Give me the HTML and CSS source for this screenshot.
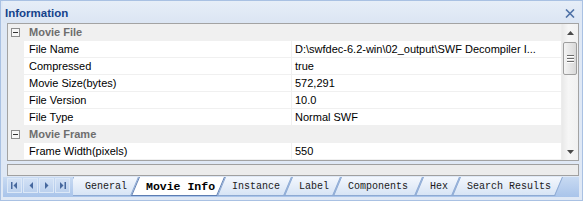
FILE: index.html
```html
<!DOCTYPE html>
<html>
<head>
<meta charset="utf-8">
<link rel="stylesheet" href="styles.css">
</head>
<body>
<div class="window">
  <div class="titlebar">
    <span class="title">Information</span>
    <svg class="close" width="10" height="9" viewBox="0 0 10 9"><path d="M1 0.5 L9 8.5 M9 0.5 L1 8.5" stroke="#4f71a6" stroke-width="1.6" fill="none"/></svg>
  </div>
  <div class="grid">
    <div class="rows">
      <div class="row cat"><span class="margin"><i class="toggle"></i></span><span class="cat-label">Movie File</span></div>
      <div class="row prop"><span class="margin"></span><span class="name">File Name</span><span class="value">D:\swfdec-6.2-win\02_output\SWF Decompiler I...</span></div>
      <div class="row prop"><span class="margin"></span><span class="name">Compressed</span><span class="value">true</span></div>
      <div class="row prop"><span class="margin"></span><span class="name">Movie Size(bytes)</span><span class="value">572,291</span></div>
      <div class="row prop"><span class="margin"></span><span class="name">File Version</span><span class="value">10.0</span></div>
      <div class="row prop"><span class="margin"></span><span class="name">File Type</span><span class="value">Normal SWF</span></div>
      <div class="row cat"><span class="margin"><i class="toggle"></i></span><span class="cat-label">Movie Frame</span></div>
      <div class="row prop"><span class="margin"></span><span class="name">Frame Width(pixels)</span><span class="value">550</span></div>
    </div>
    <div class="vscroll">
      <div class="sbtn"><svg width="7" height="4" viewBox="0 0 7 4"><path d="M3.5 0 L7 4 L0 4 Z" fill="#4a4a4a"/></svg></div>
      <div class="track"><div class="thumb"><i></i><i></i><i></i></div></div>
      <div class="sbtn"><svg width="7" height="4" viewBox="0 0 7 4"><path d="M0 0 L7 0 L3.5 4 Z" fill="#4a4a4a"/></svg></div>
    </div>
  </div>
  <div class="desc"></div>
  <div class="tabstrip">
    <div class="nav">
      <span class="navbtn"><svg width="7" height="7" viewBox="0 0 7 7"><rect x="0" y="0" width="1.5" height="7" fill="#46689e"/><path d="M6 0 L6 7 L2.5 3.5 Z" fill="#46689e"/></svg></span>
      <span class="navbtn"><svg width="4" height="7" viewBox="0 0 4 7"><path d="M4 0 L4 7 L0.5 3.5 Z" fill="#46689e"/></svg></span>
      <span class="navbtn"><svg width="4" height="7" viewBox="0 0 4 7"><path d="M0 0 L0 7 L3.5 3.5 Z" fill="#46689e"/></svg></span>
      <span class="navbtn"><svg width="7" height="7" viewBox="0 0 7 7"><path d="M1 0 L1 7 L4.5 3.5 Z" fill="#46689e"/><rect x="5.5" y="0" width="1.5" height="7" fill="#46689e"/></svg></span>
    </div>
    <div class="tabs">
      <span class="tab first">General</span>
      <span class="tab active">Movie Info</span>
      <span class="tab">Instance</span>
      <span class="tab">Label</span>
      <span class="tab wide">Components</span>
      <span class="tab">Hex</span>
      <span class="tab">Search Results</span>
    </div>
  </div>
</div>
</body>
</html>
```

FILE: styles.css
```css
html, body {
  margin: 0;
  padding: 0;
}
body {
  width: 583px;
  height: 201px;
  overflow: hidden;
  font-family: "Liberation Sans", Arial, sans-serif;
  font-size: 11px;
  color: #000;
}
.window {
  box-sizing: border-box;
  width: 583px;
  height: 201px;
  border: 1px solid #a9c1e3;
  background: #dfe8f5;
  padding: 0 2px 3px 2px;
  display: flex;
  flex-direction: column;
}
.titlebar {
  height: 22px;
  display: flex;
  align-items: center;
  justify-content: space-between;
  padding: 0 5px 0 2px;
  background: linear-gradient(#e6eef8, #dbe5f3);
}
.title {
  font-weight: bold;
  font-size: 11.5px;
  color: #15428b;
  margin-top: 1px;
}
.close {
  display: block;
  margin-top: 3px;
}
.grid {
  box-sizing: border-box;
  margin-left: 4px;
  width: 572px;
  height: 138px;
  border: 1px solid #a3a3a3;
  background: #fff;
  display: flex;
}
.rows {
  flex: 1;
  display: flex;
  flex-direction: column;
}
.row {
  height: 17px;
  display: flex;
  line-height: 16px;
}
.margin {
  width: 16px;
  flex: none;
  background: #f0f0f0;
  position: relative;
}
.toggle {
  position: absolute;
  left: 3px;
  top: 4px;
  box-sizing: border-box;
  width: 9px;
  height: 9px;
  border: 1px solid #8d8d8d;
  background: #f7f7f7;
}
.toggle::after {
  content: "";
  position: absolute;
  left: 1px;
  top: 3px;
  width: 5px;
  height: 1px;
  background: #333;
}
.cat {
  background: #f0f0f0;
}
.cat-label {
  padding-left: 5px;
  font-weight: bold;
  color: #6e6e6e;
}
.name {
  box-sizing: border-box;
  width: 268px;
  flex: none;
  padding-left: 5px;
  border-right: 1px solid #f0f0f0;
  border-bottom: 1px solid #f0f0f0;
}
.value {
  flex: 1;
  padding-left: 3px;
  border-bottom: 1px solid #f0f0f0;
  white-space: nowrap;
  overflow: hidden;
}
.vscroll {
  width: 17px;
  flex: none;
  display: flex;
  flex-direction: column;
  background: linear-gradient(90deg, #e9e9e9, #f6f6f6 40%, #f1f1f1);
  border-left: 1px solid #ececec;
  box-sizing: border-box;
}
.sbtn {
  height: 17px;
  display: flex;
  align-items: center;
  justify-content: center;
}
.sbtn svg {
  display: block;
}
.track {
  flex: 1;
  padding-top: 1px;
}
.thumb {
  box-sizing: border-box;
  margin: 0 1px 0 1px;
  height: 33px;
  border: 1px solid #9e9e9e;
  border-radius: 2px;
  background: linear-gradient(90deg, #f4f4f4, #e6e6e6 50%, #d9d9d9);
  display: flex;
  flex-direction: column;
  align-items: center;
  justify-content: center;
  gap: 1px;
}
.thumb i {
  display: block;
  width: 7px;
  height: 1px;
  background: #6c6c6c;
  border-bottom: 1px solid #fff;
}
.desc {
  box-sizing: border-box;
  margin: 3px 0 0 4px;
  width: 572px;
  height: 12px;
  border: 1px solid #a0a0a0;
  background: #ececec;
}
.tabstrip {
  margin-top: 1px;
  width: 576px;
  height: 20px;
  background: linear-gradient(#c8daf2, #a9c4ea);
  display: flex;
}
.nav {
  display: flex;
  gap: 1px;
  padding: 1px 0 0 4px;
}
.navbtn {
  box-sizing: border-box;
  width: 15px;
  height: 15px;
  border: 1px solid #dce8f7;
  background: linear-gradient(#d2e1f5, #bcd1ee);
  display: flex;
  align-items: center;
  justify-content: center;
}
.navbtn svg {
  display: block;
}
.tabs {
  display: flex;
  margin-left: 3px;
}
.tab {
  position: relative;
  height: 19px;
  line-height: 19px;
  padding: 0 12px 0 15px;
  margin-left: -8px;
  font-family: "Liberation Mono", "Courier New", monospace;
  font-size: 10px;
  color: #1a1a1a;
  white-space: nowrap;
  z-index: 1;
}
.tab::before {
  content: "";
  position: absolute;
  left: 0;
  right: 8px;
  top: 0;
  bottom: 0;
  box-sizing: border-box;
  border: 1px solid #8eaad3;
  border-top: none;
  background: linear-gradient(#f3f7fd, #d7e4f5);
  transform-origin: bottom left;
  transform: skewX(-22.8deg);
  z-index: -1;
}
.tab.first {
  margin-left: 0;
  padding-left: 12px;
  clip-path: inset(0 -40px 0 0);
}
.tab.first::before {
  left: -8px;
}
.tab.wide {
  padding-right: 15px;
}
.tab.active {
  z-index: 2;
  font-weight: bold;
  font-size: 11.5px;
  color: #000;
  padding-right: 10px;
}
.tab.active::before {
  background: #fff;
  border-color: #5d7db2;
}
```
